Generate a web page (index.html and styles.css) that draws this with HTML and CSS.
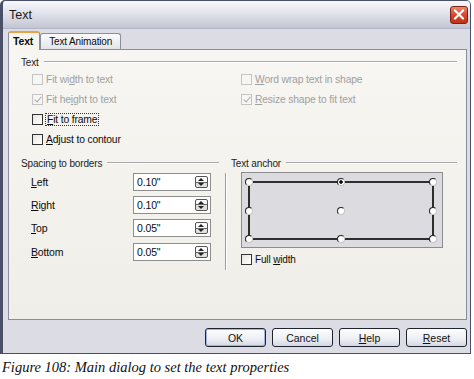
FILE: index.html
```html
<!DOCTYPE html>
<html lang="en">
<head>
  <meta charset="UTF-8">
  <title>Text</title>
  <link rel="stylesheet" href="styles.css">
</head>
<body>
  <div class="window">
    <div class="titlebar">
      <span class="title">Text</span>
      <span class="close">
        <svg width="12" height="11" viewBox="0 0 12 11"><path d="M2 1.5 L10 9.5 M10 1.5 L2 9.5" stroke="#fff" stroke-width="2.2" stroke-linecap="round"/></svg>
      </span>
    </div>

    <div class="tabs">
      <span class="tab active">Text</span>
      <span class="tab">Text Animation</span>
    </div>

    <div class="panel">
      <div class="group-head"><span>Text</span></div>
      <div class="checks">
        <label class="check disabled"><span class="box"></span><span>Fit wi<u>d</u>th to text</span></label>
        <label class="check disabled"><span class="box"></span><span><u>W</u>ord wrap text in shape</span></label>
        <label class="check disabled"><span class="box ticked"></span><span>Fit he<u>i</u>ght to text</span></label>
        <label class="check disabled"><span class="box ticked"></span><span><u>R</u>esize shape to fit text</span></label>
        <label class="check"><span class="box"></span><span class="focus"><u>F</u>it to frame</span></label>
        <span></span>
        <label class="check"><span class="box"></span><span><u>A</u>djust to contour</span></label>
      </div>

      <div class="lower">
        <div class="spacing">
          <div class="group-head"><span>Spacing to borders</span></div>
          <div class="fields">
            <div class="field-row"><span class="lbl"><u>L</u>eft</span><span class="spin"><span>0.10"</span><span class="arrows"></span></span></div>
            <div class="field-row"><span class="lbl"><u>R</u>ight</span><span class="spin"><span>0.10"</span><span class="arrows"></span></span></div>
            <div class="field-row"><span class="lbl"><u>T</u>op</span><span class="spin"><span>0.05"</span><span class="arrows"></span></span></div>
            <div class="field-row"><span class="lbl"><u>B</u>ottom</span><span class="spin"><span>0.05"</span><span class="arrows"></span></span></div>
          </div>
        </div>
        <div class="divider"></div>
        <div class="anchor">
          <div class="group-head"><span>Text anchor</span></div>
          <div class="anchor-box">
            <div class="anchor-frame"></div>
            <div class="dots">
              <span class="dot"></span><span class="dot on"></span><span class="dot"></span>
              <span class="dot"></span><span class="dot"></span><span class="dot"></span>
              <span class="dot"></span><span class="dot"></span><span class="dot"></span>
            </div>
          </div>
          <label class="check full"><span class="box"></span><span>Full <u>w</u>idth</span></label>
        </div>
      </div>
    </div>

    <div class="buttons">
      <button class="default">OK</button>
      <button>Cancel</button>
      <button><u>H</u>elp</button>
      <button><u>R</u>eset</button>
    </div>
  </div>
  <p class="caption">Figure 108: Main dialog to set the text properties</p>
</body>
</html>
```

FILE: styles.css
```css
body {
  margin: 0;
  background: #fff;
  font-family: "Liberation Sans", Arial, sans-serif;
  font-size: 10px;
  letter-spacing: -0.15px;
  color: #0c0c0c;
}
u {
  text-decoration: underline;
  text-underline-offset: 1px;
}
.window {
  width: 471px;
  height: 354px;
  box-sizing: border-box;
  border: 1px solid #4a5068;
  border-left-width: 3px;
  border-radius: 5px 5px 0 0;
  background: #dcdce5;
  padding: 0 3px 0 1px;
}
.titlebar {
  height: 27px;
  margin: 0 -3px 0 -1px;
  display: flex;
  align-items: center;
  justify-content: space-between;
  padding: 0 2px 0 6px;
  background: linear-gradient(#f7f7fb, #e2e3ec 45%, #c3c5d3);
  border-bottom: 1px solid #b3b6c6;
  border-radius: 4px 4px 0 0;
}
.title {
  font-size: 12.5px;
  letter-spacing: 0;
  color: #1a1a1a;
}
.close {
  width: 18px;
  height: 18px;
  box-sizing: border-box;
  border: 1px solid #7a2214;
  border-radius: 3px;
  background: linear-gradient(#ea8a72, #d7452a 50%, #c23318);
  display: flex;
  align-items: center;
  justify-content: center;
}
.tabs {
  display: flex;
  align-items: flex-end;
  height: 20px;
  padding-left: 4px;
}
.tab {
  height: 15px;
  padding: 0 8px;
  line-height: 15px;
  font-size: 10px;
  background: linear-gradient(#fbfbfc, #e3e4ea);
  border: 1px solid #8a8d9c;
  border-bottom: none;
  border-radius: 3px 3px 0 0;
}
.tab.active {
  height: 17px;
  line-height: 17px;
  padding: 0 6px 0 4px;
  font-size: 10.5px;
  font-weight: bold;
  background: #f6f5f0;
  border-top: 2px solid #e7a34a;
  margin-bottom: -1px;
  position: relative;
}
.panel {
  margin-left: 4px;
  height: 271px;
  box-sizing: border-box;
  border: 1px solid #8a8d9c;
  background: linear-gradient(#f7f6f2, #efeee8);
  padding: 5px 9px 0 12px;
}
.group-head {
  display: flex;
  align-items: center;
  height: 14px;
  color: #222;
}
.group-head::after {
  content: "";
  flex: 1;
  height: 1px;
  margin-left: 5px;
  background: #a8a8ac;
  border-bottom: 1px solid #fff;
}
.checks {
  display: grid;
  grid-template-columns: 209px 1fr;
  grid-auto-rows: 20px;
  padding-left: 11px;
  font-size: 10.3px;
}
.check {
  display: flex;
  align-items: center;
  gap: 3px;
}
.check.disabled {
  color: #a0a0a0;
}
.box {
  width: 11px;
  height: 11px;
  box-sizing: border-box;
  border: 1px solid #333;
  background: linear-gradient(135deg, #e6e6e0, #fff);
  position: relative;
}
.disabled .box {
  border-color: #c4c4c4;
  background: #f6f6f4;
}
.box.ticked::after {
  content: "";
  position: absolute;
  left: 3px;
  top: 0;
  width: 3px;
  height: 6px;
  border: solid #a8a8a8;
  border-width: 0 1.5px 1.5px 0;
  transform: rotate(40deg);
}
.focus {
  outline: 1px dotted #333;
  padding: 0 1px;
}
.lower {
  display: grid;
  grid-template-columns: 190px 20px 1fr;
  margin-top: 7px;
}
.spacing .group-head {
  margin-right: -8px;
}
.fields {
  padding-left: 10px;
}
.field-row {
  display: flex;
  align-items: center;
  justify-content: space-between;
  height: 23.3px;
}
.lbl {
  font-size: 10.5px;
}
.spin {
  width: 78px;
  height: 18px;
  box-sizing: border-box;
  border: 1px solid #8e8e8e;
  background: #fff;
  display: flex;
  align-items: center;
  justify-content: space-between;
  padding: 0 2px 0 3px;
  font-size: 10.5px;
}
.arrows {
  width: 13px;
  height: 12px;
  box-sizing: border-box;
  border: 1px solid #555;
  border-radius: 2px;
  background: linear-gradient(#fafafa 45%, #666 45%, #666 55%, #e0e0e0 55%);
  position: relative;
}
.arrows::before,
.arrows::after {
  content: "";
  position: absolute;
  left: 2px;
  border-left: 3.5px solid transparent;
  border-right: 3.5px solid transparent;
}
.arrows::before {
  top: 1px;
  border-bottom: 3px solid #222;
}
.arrows::after {
  bottom: 1px;
  border-top: 3px solid #222;
}
.divider {
  margin: 17px 0 0 14px;
  height: 97px;
  width: 1px;
  justify-self: start;
  background: #9c9c9c;
  border-right: 1px solid #fff;
}
.anchor-box {
  margin: 2px 0 0 10px;
  width: 202px;
  height: 76px;
  box-sizing: border-box;
  border: 1px solid #8c8c90;
  background: #dcdce0;
  position: relative;
}
.anchor-frame {
  position: absolute;
  left: 6px;
  top: 8px;
  width: 186px;
  height: 59px;
  border: 2px solid #2e2e2e;
  box-sizing: border-box;
}
.dots {
  position: absolute;
  left: 3px;
  top: 5px;
  width: 192px;
  height: 65px;
  display: grid;
  grid-template-columns: 8px 1fr 8px;
  grid-template-rows: 8px 1fr 8px;
  justify-items: center;
  align-items: center;
}
.dot {
  width: 8px;
  height: 8px;
  box-sizing: border-box;
  border-radius: 50%;
  background: #fff;
  border: 1.5px solid #c4c4c4;
  border-top-color: #222;
  border-left-color: #222;
}
.dot.on {
  background: radial-gradient(circle, #111 0 1.5px, #fff 2px);
}
.full {
  margin: 6px 0 0 10px;
}
.buttons {
  display: flex;
  justify-content: flex-end;
  gap: 6px;
  padding: 8px 0 0;
}
.buttons button {
  width: 61px;
  height: 19px;
  padding: 0;
  font-family: inherit;
  font-size: 10.5px;
  letter-spacing: 0;
  color: #111;
  border: 1px solid #1f2530;
  border-radius: 3px;
  background: linear-gradient(#fefefe, #eceef4 60%, #d5d8e2);
}
.buttons button.default {
  box-shadow: inset 0 0 0 1px #9fb4e0;
}
.caption {
  margin: 5px 0 0 2px;
  font-family: "Liberation Serif", "Times New Roman", serif;
  font-style: italic;
  font-size: 14.5px;
  letter-spacing: 0;
  color: #111;
}
```
